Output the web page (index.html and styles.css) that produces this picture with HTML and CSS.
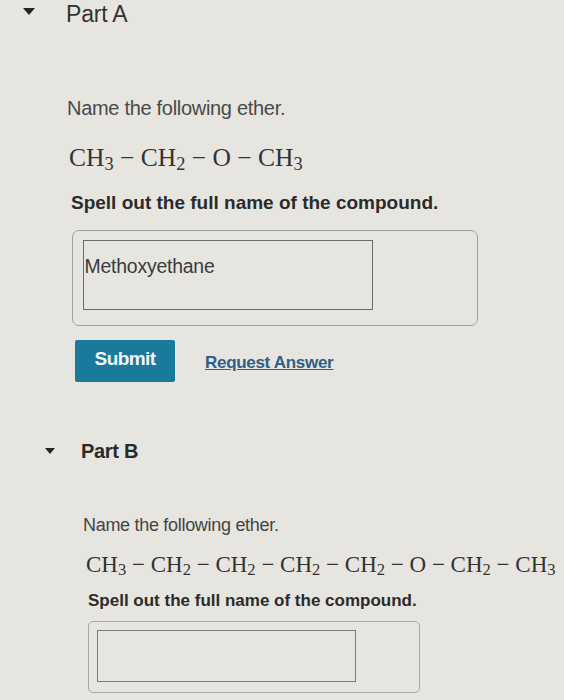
FILE: index.html
```html
<!DOCTYPE html>
<html>
<head>
<meta charset="utf-8">
<link rel="stylesheet" href="styles.css">
</head>
<body>
<section class="part part-a">
  <div class="part-head">
    <span class="tri"></span>
    <span class="part-title">Part A</span>
  </div>
  <div class="part-body">
    <p class="prompt">Name the following ether.</p>
    <p class="formula">CH<sub>3</sub> − CH<sub>2</sub> − O − CH<sub>3</sub></p>
    <p class="instr">Spell out the full name of the compound.</p>
    <div class="answer-box">
      <div class="input">Methoxyethane</div>
    </div>
    <div class="actions">
      <button class="submit">Submit</button>
      <a class="request" href="#">Request Answer</a>
    </div>
  </div>
</section>
<section class="part part-b">
  <div class="part-head">
    <span class="tri"></span>
    <span class="part-title">Part B</span>
  </div>
  <div class="part-body">
    <p class="prompt">Name the following ether.</p>
    <p class="formula">CH<sub>3</sub> − CH<sub>2</sub> − CH<sub>2</sub> − CH<sub>2</sub> − CH<sub>2</sub> − O − CH<sub>2</sub> − CH<sub>3</sub></p>
    <p class="instr">Spell out the full name of the compound.</p>
    <div class="answer-box">
      <div class="input"></div>
    </div>
  </div>
</section>
</body>
</html>
```
FILE: styles.css
```css
* { box-sizing: border-box; }
html, body {
  margin: 0;
  padding: 0;
  background: #e7e5e0;
  font-family: "Liberation Sans", Arial, sans-serif;
  color: #2e2e2e;
  overflow: hidden;
  height: 700px;
}
p { margin: 0; }

.part-head {
  display: flex;
  align-items: flex-start;
}
.tri {
  width: 0;
  height: 0;
  border-left: 6px solid transparent;
  border-right: 6px solid transparent;
  border-top: 7px solid #262626;
}

/* Part A (closer to camera, larger) */
.part-a .part-head {
  padding-left: 23px;
  height: 28px;
}
.part-a .tri { margin-top: 8px; margin-right: 31px; }
.part-a .part-title {
  font-size: 23px;
  line-height: 28px;
  color: #333;
  letter-spacing: -0.2px;
}
.part-a .part-body {
  padding-left: 67px;
}
.part-a .prompt {
  margin-top: 68px;
  font-size: 20px;
  line-height: 24px;
  color: #4a4a4a;
  letter-spacing: -0.3px;
}
.part-a .formula {
  margin-top: 23px;
  font-family: "Liberation Serif", "Times New Roman", serif;
  font-size: 25.5px;
  line-height: 30px;
  color: #333;
  padding-left: 2px;
}
.part-a .instr {
  margin-top: 18px;
  font-size: 19px;
  line-height: 24px;
  font-weight: bold;
  color: #2b2b2b;
  padding-left: 4px;
}
.part-a .answer-box {
  margin-top: 15px;
  margin-left: 5px;
  width: 406px;
  height: 96px;
  border: 1.5px solid #a3a29e;
  border-radius: 7px;
  padding: 8.5px 0 0 9.5px;
}
.part-a .input {
  width: 290px;
  height: 70px;
  border: 1.5px solid #6c6b68;
  font-size: 19.4px;
  line-height: 22px;
  color: #3a3a3a;
  padding: 14px 0 0 1px;
  letter-spacing: -0.2px;
}
.part-a .actions {
  display: flex;
  align-items: center;
  margin-top: 14px;
  margin-left: 8px;
}
.submit {
  width: 100px;
  height: 42px;
  background: #1a7a9b;
  border: none;
  border-radius: 2px;
  color: #f2f6f8;
  font-family: "Liberation Sans", Arial, sans-serif;
  font-weight: bold;
  font-size: 19px;
  letter-spacing: -0.6px;
  padding: 0 0 4px 0;
}
.request {
  margin-left: 30px;
  margin-top: 3px;
  font-size: 17px;
  font-weight: bold;
  color: #2f5f86;
  text-decoration: underline;
  letter-spacing: -0.3px;
}

/* Part B (further from camera) */
.part-b .part-head {
  margin-top: 57px;
  padding-left: 45px;
  height: 24px;
}
.part-b .tri {
  margin-top: 9px;
  margin-right: 26px;
  border-left-width: 5.5px;
  border-right-width: 5.5px;
  border-top-width: 6px;
}
.part-b .part-title {
  font-size: 20px;
  line-height: 24px;
  font-weight: bold;
  color: #2a2a2a;
  letter-spacing: -0.3px;
}
.part-b .part-body {
  padding-left: 83px;
}
.part-b .prompt {
  margin-top: 50.5px;
  font-size: 18px;
  line-height: 22px;
  color: #444;
  letter-spacing: -0.3px;
}
.part-b .formula {
  margin-top: 16.5px;
  font-family: "Liberation Serif", "Times New Roman", serif;
  font-size: 23px;
  line-height: 26px;
  color: #333;
  padding-left: 3px;
  white-space: nowrap;
}
.part-b .instr {
  margin-top: 12.5px;
  font-size: 17px;
  line-height: 20px;
  font-weight: bold;
  color: #2b2b2b;
  padding-left: 5px;
}
.part-b .answer-box {
  margin-top: 10.5px;
  margin-left: 5px;
  width: 332px;
  height: 72px;
  border: 1.5px solid #a8a7a3;
  border-radius: 5px;
  padding: 7.5px 0 0 7.5px;
}
.part-b .input {
  width: 259px;
  height: 52px;
  border: 1.5px solid #7a7a78;
}

sub {
  font-size: 72%;
  vertical-align: -0.2em;
  line-height: 0;
}
```
